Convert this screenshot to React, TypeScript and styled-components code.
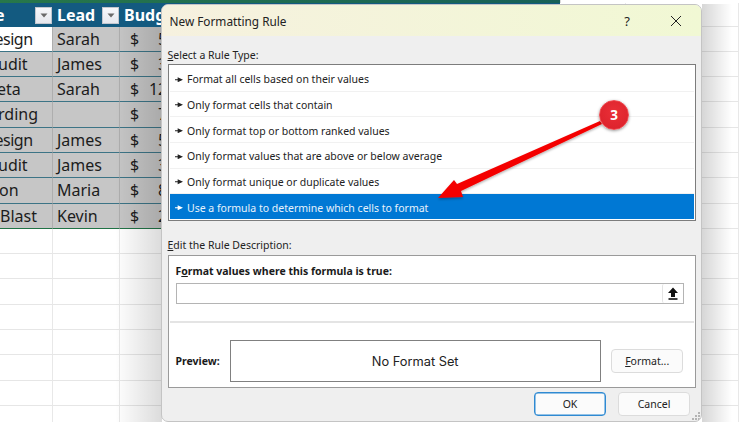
import styled, { createGlobalStyle } from 'styled-components'

const GlobalStyle = createGlobalStyle`
  html, body {
    margin: 0;
    padding: 0;
    width: 739px;
    height: 422px;
    overflow: hidden;
    background: #fff;
  }
`

const COLUMNS = '53px 67px 114px 326px 66px 113px'

const rows = [
  { item: 'esign', shift: 5.5, tight: true, lead: 'Sarah', budget: '5,000', active: true },
  { item: 'udit', shift: 2, lead: 'James', budget: '3,000' },
  { item: 'eta', shift: 3, lead: 'Sarah', budget: '12,000' },
  { item: 'rding', shift: 2, lead: '', budget: '7,000' },
  { item: 'esign', shift: 5.5, tight: true, lead: 'James', budget: '5,000' },
  { item: 'udit', shift: 2, lead: 'James', budget: '3,000' },
  { item: 'on', shift: 1, lead: 'Maria', budget: '8,000' },
  { item: 'Blast', shift: 0, lead: 'Kevin', budget: '2,000' },
]

const ruleTypes = [
  'Format all cells based on their values',
  'Only format cells that contain',
  'Only format top or bottom ranked values',
  'Only format values that are above or below average',
  'Only format unique or duplicate values',
  'Use a formula to determine which cells to format',
]

const FilterIcon = () => (
  <svg width="8" height="5" viewBox="0 0 8 5">
    <path d="M0.5 0.5h7L4 4.5z" fill="#6a6a6a" />
  </svg>
)

const App = () => {
  return (
    <Page>
      <GlobalStyle />
      <Sheet>
        <TopRow>
          <TopStrip />
          <TopGap />
        </TopRow>
        <GridRow $height={23.5}>
          <HeaderCell>
            <ClippedHead>e</ClippedHead>
            <FilterButton><FilterIcon /></FilterButton>
          </HeaderCell>
          <HeaderCell>
            <span>Lead</span>
            <FilterButton><FilterIcon /></FilterButton>
          </HeaderCell>
          <HeaderCell><span>Budg</span></HeaderCell>
          <HeaderCell />
          <EmptyCell />
          <EmptyCell />
        </GridRow>
        {rows.map((row, i) => (
          <GridRow key={i}>
            <DataCell $active={row.active} $last={i === rows.length - 1}>
              <ClippedText $tight={row.tight} style={{ marginLeft: -row.shift }}>{row.item}</ClippedText>
            </DataCell>
            <DataCell $last={i === rows.length - 1} $pad={4}>{row.lead}</DataCell>
            <BudgetCell $last={i === rows.length - 1}>
              <span>$</span>
              <span>{row.budget}</span>
            </BudgetCell>
            <DataCell $last={i === rows.length - 1} />
            <EmptyCell />
            <EmptyCell />
          </GridRow>
        ))}
        {Array.from({ length: 8 }).map((_, i) => (
          <GridRow key={i}>
            <EmptyCell />
            <EmptyCell />
            <EmptyCell />
            <EmptyCell />
            <EmptyCell />
            <EmptyCell />
          </GridRow>
        ))}
      </Sheet>
      <LeftShade />
      <RightShade />

      <Dialog>
        <TitleBar>
          <Title>New Formatting Rule</Title>
          <TitleButtons>
            <HelpMark>?</HelpMark>
            <svg width="12" height="12" viewBox="0 0 12 12">
              <path d="M1 1l10 10M11 1L1 11" stroke="#222" strokeWidth="1" fill="none" />
            </svg>
          </TitleButtons>
        </TitleBar>
        <DialogBody>
          <GroupLabel><u>S</u>elect a Rule Type:</GroupLabel>
          <RuleList>
            {ruleTypes.map((rule, i) => (
              <RuleItem key={rule} $selected={i === ruleTypes.length - 1}>
                <RuleMark viewBox="0 0 9 6" $selected={i === ruleTypes.length - 1}>
                  <path d="M0 2.4h3V0.2L9 3 3 5.8V3.6H0z" />
                </RuleMark>
                {rule}
              </RuleItem>
            ))}
          </RuleList>
          <EditLabel><u>E</u>dit the Rule Description:</EditLabel>
          <EditBox>
            <BoldLabel>F<u>o</u>rmat values where this formula is true:</BoldLabel>
            <FormulaField>
              <UploadButton>
                <svg width="12" height="13" viewBox="0 0 12 13">
                  <path d="M6 0.5L11 6H8v4H4V6H1z" fill="#111" />
                  <rect x="1.5" y="11.2" width="9" height="1.6" fill="#111" />
                </svg>
              </UploadButton>
            </FormulaField>
            <Divider />
            <PreviewRow>
              <PreviewLabel>Preview:</PreviewLabel>
              <PreviewBox>No Format Set</PreviewBox>
              <SmallButton><u>F</u>ormat...</SmallButton>
            </PreviewRow>
          </EditBox>
          <Footer>
            <SmallButton $primary>OK</SmallButton>
            <SmallButton>Cancel</SmallButton>
          </Footer>
        </DialogBody>
        <Grip width="12" height="9" viewBox="0 0 12 9">
          <path d="M9 0h2v2H9zM6 3h2v2H6zM9 3h2v2H9zM3 6h2v2H3zM6 6h2v2H6zM9 6h2v2H9z" fill="#b4b4b4" />
        </Grip>
      </Dialog>

      <Arrow width="739" height="422" viewBox="0 0 739 422">
        <defs>
          <filter id="arrowShadow" x="-10%" y="-10%" width="120%" height="130%">
            <feDropShadow dx="0" dy="1.5" stdDeviation="1.2" floodColor="#000" floodOpacity="0.3" />
          </filter>
        </defs>
        <path
          d="M600 121L602 124L461 191L463 197L438 198L454 180L457 184z"
          fill="#f40000"
          filter="url(#arrowShadow)"
        />
      </Arrow>
      <Badge>3</Badge>
    </Page>
  )
}

export default App

const Page = styled.div`
  position: relative;
  width: 739px;
  height: 422px;
  overflow: hidden;
  background: #fff;
`

const Sheet = styled.div`
  display: flex;
  flex-direction: column;
  width: 739px;
`

const TopRow = styled.div`
  display: flex;
  height: 3px;
`

const TopStrip = styled.div`
  width: 560px;
  background: linear-gradient(90deg, #27774a, #176058);
`

const TopGap = styled.div`
  flex: 1;
  border-left: 1px solid #dcdcdc;
`

const GridRow = styled.div<{ $height?: number }>`
  display: grid;
  grid-template-columns: ${COLUMNS};
  height: ${(p) => p.$height ?? 25.3}px;
  width: 739px;
`

const HeaderCell = styled.div`
  display: flex;
  align-items: center;
  justify-content: space-between;
  box-sizing: border-box;
  padding: 0 1px 0 4px;
  background: #135a80;
  font: 700 16px/24px 'Noto Sans', sans-serif;
  color: #fff;
  overflow: hidden;
`

const ClippedHead = styled.span`
  margin-left: -9px;
`

const FilterButton = styled.div`
  display: flex;
  align-items: center;
  justify-content: center;
  width: 17px;
  height: 17px;
  margin-top: 1px;
  background: linear-gradient(#f6f7fa, #e6e8ee);
  border: 1px solid #c2c6ce;
  box-sizing: border-box;
`

const DataCell = styled.div<{ $active?: boolean; $last?: boolean; $pad?: number }>`
  box-sizing: border-box;
  padding-left: ${(p) => p.$pad ?? 0}px;
  background: ${(p) => (p.$active ? '#fff' : '#c6c6c6')};
  border-right: 1px solid #aeaeae;
  border-bottom: ${(p) => (p.$last ? '1.5px solid #217346' : '1.5px solid #3c7486')};
  font: 400 16px/24px 'Noto Sans', sans-serif;
  color: #1c1c1c;
  white-space: nowrap;
  overflow: hidden;
`

const ClippedText = styled.span<{ $tight?: boolean }>`
  display: inline-block;
  letter-spacing: ${(p) => (p.$tight ? '-0.5px' : '0')};
`

const BudgetCell = styled(DataCell)`
  display: flex;
  justify-content: space-between;
  padding: 0 34px 0 10px;
`

const EmptyCell = styled.div`
  box-sizing: border-box;
  border-right: 1px solid #e8e8e8;
  border-bottom: 1px solid #e6e6e6;
`

const LeftShade = styled.div`
  position: absolute;
  left: 115px;
  top: 27px;
  width: 47px;
  height: 395px;
  background: linear-gradient(90deg, rgba(0, 0, 0, 0), rgba(0, 0, 0, 0.14));
`

const RightShade = styled.div`
  position: absolute;
  left: 702px;
  top: 4px;
  width: 30px;
  height: 418px;
  background: linear-gradient(90deg, rgba(0, 0, 0, 0.16), rgba(0, 0, 0, 0));
`

const Dialog = styled.div`
  position: absolute;
  left: 161px;
  top: 4px;
  width: 541px;
  height: 418px;
  box-sizing: border-box;
  display: flex;
  flex-direction: column;
  background: #efefef;
  border: 1px solid #c4c4c4;
  border-radius: 7px;
  overflow: hidden;
  font-family: 'Noto Sans', sans-serif;
  color: #1a1a1a;
`

const TitleBar = styled.div`
  display: flex;
  align-items: center;
  justify-content: space-between;
  flex: none;
  height: 31px;
  padding: 0 19px 0 7.5px;
  background: linear-gradient(90deg, #f6f1df, #f1f8d4);
`

const Title = styled.div`
  font-size: 11.8px;
  color: #222;
`

const TitleButtons = styled.div`
  display: flex;
  align-items: center;
  gap: 40px;
`

const HelpMark = styled.span`
  font-size: 13px;
  color: #222;
`

const DialogBody = styled.div`
  display: flex;
  flex-direction: column;
  flex: 1;
  padding: 12px 5px 0 5.5px;
`

const GroupLabel = styled.div`
  height: 16px;
  font-size: 10.5px;
  line-height: 14px;
  color: #222;
`

const RuleList = styled.div`
  display: flex;
  flex-direction: column;
  flex: none;
  width: 528px;
  height: 157px;
  box-sizing: border-box;
  padding: 1px;
  background: #fff;
  border: 1.5px solid #7c7c7c;
`

const RuleItem = styled.div<{ $selected?: boolean }>`
  display: flex;
  align-items: center;
  gap: 4px;
  flex: 1;
  box-sizing: border-box;
  padding: 2px 0 0 5.5px;
  font-size: 10.5px;
  background: ${(p) => (p.$selected ? '#0078d4' : '#fff')};
  color: ${(p) => (p.$selected ? '#e8f2fb' : '#222')};
  border-bottom: ${(p) => (p.$selected ? 'none' : '1px solid #f1f1f1')};
`

const RuleMark = styled.svg<{ $selected?: boolean }>`
  width: 8px;
  height: 5.5px;
  fill: ${(p) => (p.$selected ? '#fff' : '#222')};
`

const EditLabel = styled(GroupLabel)`
  margin-top: 17px;
  height: 17px;
`

const EditBox = styled.div`
  display: flex;
  flex-direction: column;
  flex: none;
  width: 528px;
  height: 133px;
  box-sizing: border-box;
  padding: 8px 0 0 7px;
  background: #fff;
  border: 1px solid #9a9a9a;
`

const BoldLabel = styled.div`
  flex: none;
  height: 16px;
  font-size: 10.5px;
  font-weight: 700;
  line-height: 14px;
  color: #1a1a1a;
`

const PreviewLabel = styled(BoldLabel)`
  padding-top: 2px;
`

const FormulaField = styled.div`
  display: flex;
  justify-content: flex-end;
  flex: none;
  width: 508.5px;
  height: 21px;
  margin-top: 3px;
  box-sizing: border-box;
  background: #fff;
  border: 1px solid #b4b4b4;
`

const UploadButton = styled.div`
  display: flex;
  align-items: center;
  justify-content: center;
  width: 20px;
  border-left: 1px solid #e4e4e4;
  border-radius: 2px;
`

const Divider = styled.div`
  flex: none;
  height: 2px;
  margin: 17px 1px 0 -6px;
  background: #e4e4e4;
`

const PreviewRow = styled.div`
  display: flex;
  align-items: center;
  flex: none;
  margin-top: 17px;
`

const PreviewBox = styled.div`
  display: flex;
  align-items: center;
  justify-content: center;
  flex: none;
  width: 371px;
  height: 42px;
  margin-left: 10px;
  margin-right: 10.5px;
  box-sizing: border-box;
  border: 1px solid #808080;
  font: 400 12.8px 'Inter', sans-serif;
  color: #222;
`

const SmallButton = styled.div<{ $primary?: boolean }>`
  display: flex;
  align-items: center;
  justify-content: center;
  flex: none;
  width: 72px;
  height: 24px;
  box-sizing: border-box;
  background: #fbfbfb;
  border: ${(p) => (p.$primary ? '1px solid #2f8ad2' : '1px solid #dcdcdc')};
  box-shadow: ${(p) => (p.$primary ? 'inset 0 0 0 0.5px #2f8ad2' : 'none')};
  border-radius: 4px;
  font-size: 10.5px;
  color: #222;
`

const Footer = styled.div`
  display: flex;
  justify-content: flex-end;
  gap: 12px;
  margin-top: 4px;
  padding-right: 6px;
`

const Grip = styled.svg`
  position: absolute;
  right: 0;
  bottom: 0;
`

const Arrow = styled.svg`
  position: absolute;
  left: 0;
  top: 0;
  pointer-events: none;
`

const Badge = styled.div`
  position: absolute;
  left: 599px;
  top: 100px;
  width: 30px;
  height: 30px;
  box-sizing: border-box;
  display: flex;
  align-items: center;
  justify-content: center;
  border: 1px solid #ee4a50;
  border-radius: 50%;
  background: radial-gradient(circle at 50% 40%, #ea2f37, #d9202a);
  box-shadow: 0 1px 3px rgba(0, 0, 0, 0.4);
  font: 700 13.5px 'Noto Sans', sans-serif;
  color: #fff;
`
